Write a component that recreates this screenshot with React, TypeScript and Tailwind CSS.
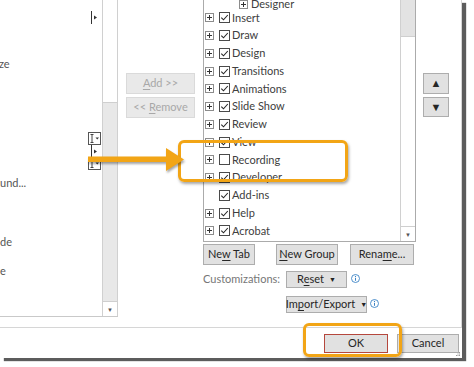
import React from "react";

const font = { fontFamily: 'Lato, "Noto Sans", sans-serif' };

function Expand() {
  return (
    <svg width="9" height="9" viewBox="0 0 9 9" className="shrink-0">
      <rect x="0.5" y="0.5" width="8" height="8" fill="#fff" stroke="#8c8c8c" />
      <path d="M2 4.5h5M4.5 2v5" stroke="#333" strokeWidth="1" />
    </svg>
  );
}

function Check({ on }: { on: boolean }) {
  return (
    <svg width="11" height="11" viewBox="0 0 11 11" className="shrink-0">
      <rect x="0.5" y="0.5" width="10" height="10" fill="#fff" stroke="#4a4a4a" />
      {on ? <path d="M2.3 5.6l2.2 2.2 4.3-4.8" fill="none" stroke="#262626" strokeWidth="1.1" /> : null}
    </svg>
  );
}

function SubMenuGlyph() {
  return (
    <svg width="12" height="13" viewBox="0 0 12 13">
      <path d="M2.5 0v13" stroke="#333" strokeWidth="1" />
      <path d="M5 4.5l3 2-3 2z" fill="#333" />
    </svg>
  );
}

function ComboGlyph() {
  return (
    <svg width="13" height="13" viewBox="0 0 13 13">
      <rect x="0.5" y="0.5" width="12" height="12" fill="#fff" stroke="#555" />
      <path d="M2.5 2.5h3M2.5 10.5h3M4 2.5v8" stroke="#444" strokeWidth="1" />
      <path d="M7.5 5.5h3.5l-1.75 2z" fill="#333" />
    </svg>
  );
}

function Info() {
  return (
    <svg width="9" height="9" viewBox="0 0 9 9" className="shrink-0">
      <circle cx="4.5" cy="4.5" r="4" fill="#fff" stroke="#3b82c4" strokeWidth="0.9" />
      <path d="M4.5 3.8v3" stroke="#3b82c4" strokeWidth="1" />
      <circle cx="4.5" cy="2.4" r="0.6" fill="#3b82c4" />
    </svg>
  );
}

const Caret = () => <span className="ml-[5px] text-[7px] leading-none text-[#222]">▼</span>;

const rows: { label: string; expand: boolean; checked: boolean }[] = [
  { label: "Insert", expand: true, checked: true },
  { label: "Draw", expand: true, checked: true },
  { label: "Design", expand: true, checked: true },
  { label: "Transitions", expand: true, checked: true },
  { label: "Animations", expand: true, checked: true },
  { label: "Slide Show", expand: true, checked: true },
  { label: "Review", expand: true, checked: true },
  { label: "View", expand: true, checked: true },
  { label: "Recording", expand: true, checked: false },
  { label: "Developer", expand: true, checked: true },
  { label: "Add-ins", expand: false, checked: true },
  { label: "Help", expand: true, checked: true },
  { label: "Acrobat", expand: true, checked: true },
];

const btn =
  "flex items-center justify-center border border-[#adadad] bg-[#e1e1e1] text-[11px] text-[#262626]";

export default function App() {
  return (
    <div className="relative h-[367px] w-[474px] overflow-hidden bg-white" style={font}>
      <div className="flex h-[358px] w-[462px] flex-col bg-white shadow-[4px_3px_1px_#5c5c5c]">
        {/* upper panel */}
        <div className="flex h-[328px] border-b border-r border-[#d6d6d6]">
          {/* left list */}
          <div className="flex h-[317px] w-[118px] border-b border-[#c9c9c9]">
            <div className="flex w-[102px] flex-col text-[11px] leading-none text-[#555]">
              <div className="h-[11px]" />
              <div className="flex h-[14px] justify-end pr-[1px]">
                <SubMenuGlyph />
              </div>
              <div className="flex h-[44px] items-end">
                <span className="-ml-[1px]">ze</span>
              </div>
              <div className="h-[63px]" />
              <div className="flex h-[13px] justify-end pr-[1px]">
                <ComboGlyph />
              </div>
              <div className="flex h-[12px] justify-end pr-[1px]">
                <SubMenuGlyph />
              </div>
              <div className="flex h-[13px] justify-end pr-[1px]">
                <ComboGlyph />
              </div>
              <div className="flex h-[18px] items-end">
                <span>und...</span>
              </div>
              <div className="flex h-[59px] items-end">
                <span>de</span>
              </div>
              <div className="flex h-[29px] items-end">
                <span>e</span>
              </div>
            </div>
            <div className="flex w-[16px] flex-col border-x border-[#d0d0d0]">
              <div className="h-[103px] border-b border-[#cfcfcf] bg-white" />
              <div className="flex-1 bg-[#e8e8e8]" />
              <div className="flex h-[15px] items-center justify-center border-t border-[#cfcfcf] bg-white text-[6px] text-[#555]">
                ▼
              </div>
            </div>
          </div>

          {/* add / remove */}
          <div className="flex w-[85px] flex-col items-center gap-[3px] pt-[73px]">
            <div className="flex h-[21px] w-[69px] items-center justify-center border border-[#dadada] bg-[#e9e9e9] text-[11px] text-[#a8a8a8]">
              <span>
                <u className="underline-offset-2">A</u>dd &gt;&gt;
              </span>
            </div>
            <div className="flex h-[21px] w-[69px] items-center justify-center border border-[#dadada] bg-[#e9e9e9] text-[11px] text-[#a8a8a8]">
              <span>
                &lt;&lt; <u className="underline-offset-2">R</u>emove
              </span>
            </div>
          </div>

          {/* main tabs list */}
          <div className="flex w-[213px] flex-col">
            <div className="flex h-[242px] border-x border-b border-[#ababab]">
              <div className="flex-1 overflow-hidden">
                <div className="flex flex-col text-[11px] text-[#404040]">
                  <div className="flex h-[9px] items-center pl-[35px]">
                    <Expand />
                    <span className="ml-[3px]">Designer</span>
                  </div>
                  {rows.map((r) => (
                    <div key={r.label} className="flex h-[17.75px] items-center pl-[1px]">
                      {r.expand ? <Expand /> : <span className="w-[9px]" />}
                      <span className="ml-[5px]">
                        <Check on={r.checked} />
                      </span>
                      <span className="ml-[2px]">{r.label}</span>
                    </div>
                  ))}
                </div>
              </div>
              <div className="flex w-[15px] flex-col border-l border-[#d0d0d0]">
                <div className="h-[36px] bg-[#e3e3e3]" />
                <div className="flex-1 border-y border-[#cfcfcf] bg-white" />
                <div className="flex h-[14px] items-center justify-center bg-white text-[6px] text-[#555]">▼</div>
              </div>
            </div>

            <div className="mt-[2px] flex h-[21px]">
              <div className={`${btn} w-[52px]`}>
                <span>
                  Ne<u className="underline-offset-2">w</u> Tab
                </span>
              </div>
              <div className={`${btn} ml-[21px] w-[62px]`}>
                <span>
                  <u className="underline-offset-2">N</u>ew Group
                </span>
              </div>
              <div className={`${btn} ml-[12px] w-[64px]`}>
                <span>
                  Rena<u className="underline-offset-2">m</u>e...
                </span>
              </div>
            </div>

            <div className="mt-[6px] flex h-[17px] items-center">
              <span className="w-[83px] text-[11px] text-[#767676]">Customizations:</span>
              <div className={`${btn} h-[17px] w-[61px]`}>
                <span>
                  R<u className="underline-offset-2">e</u>set
                </span>
                <Caret />
              </div>
              <div className="ml-[4px] self-start pt-[3px]">
                <Info />
              </div>
            </div>

            <div className="mt-[8px] flex h-[17px] items-center pl-[83px]">
              <div className={`${btn} h-[17px] w-[81px]`}>
                <span>
                  Im<u className="underline-offset-2">p</u>ort/Export
                </span>
                <Caret />
              </div>
              <div className="ml-[3px] self-start pt-[3px]">
                <Info />
              </div>
            </div>
          </div>

          {/* move up / down */}
          <div className="flex flex-1 flex-col gap-[3px] pl-[7px] pt-[73px]">
            <div className={`${btn} h-[21px] w-[26px] text-[7px]`}>▲</div>
            <div className={`${btn} h-[20px] w-[26px] text-[7px]`}>▼</div>
          </div>
        </div>

        {/* bottom buttons */}
        <div className="relative flex flex-1 items-center justify-end gap-[9px] pr-[3px]">
          <div className={`${btn} h-[19px] w-[64px] border-[#b5473d]`}>OK</div>
          <div className={`${btn} h-[19px] w-[62px]`}>Cancel</div>
          <svg width="5" height="5" viewBox="0 0 5 5" className="absolute bottom-[1px] right-[1px]">
            <rect x="3" y="0" width="1" height="1" fill="#999" />
            <rect x="1.5" y="1.5" width="1" height="1" fill="#999" />
            <rect x="3" y="1.5" width="1" height="1" fill="#999" />
            <rect x="0" y="3" width="1" height="1" fill="#999" />
            <rect x="1.5" y="3" width="1" height="1" fill="#999" />
            <rect x="3" y="3" width="1" height="1" fill="#999" />
          </svg>
        </div>
      </div>

      {/* annotations */}
      <div className="absolute left-[178px] top-[140px] h-[42px] w-[170px] rounded-[6px] border-[3px] border-[#f2a516] shadow-[1px_2px_3px_rgba(0,0,0,0.35)]" />
      <div className="absolute left-[303px] top-[323px] h-[34px] w-[99px] rounded-[6px] border-[3px] border-[#f2a516] shadow-[1px_2px_3px_rgba(0,0,0,0.35)]" />
      <svg
        width="100"
        height="30"
        viewBox="0 0 100 30"
        className="absolute left-[86px] top-[145px] drop-shadow-[1px_2px_1px_rgba(0,0,0,0.35)]"
      >
        <rect x="2" y="11.5" width="80" height="5.5" fill="#f2a516" />
        <path d="M80 3l18 11.5L80 26z" fill="#f2a516" />
      </svg>
    </div>
  );
}
